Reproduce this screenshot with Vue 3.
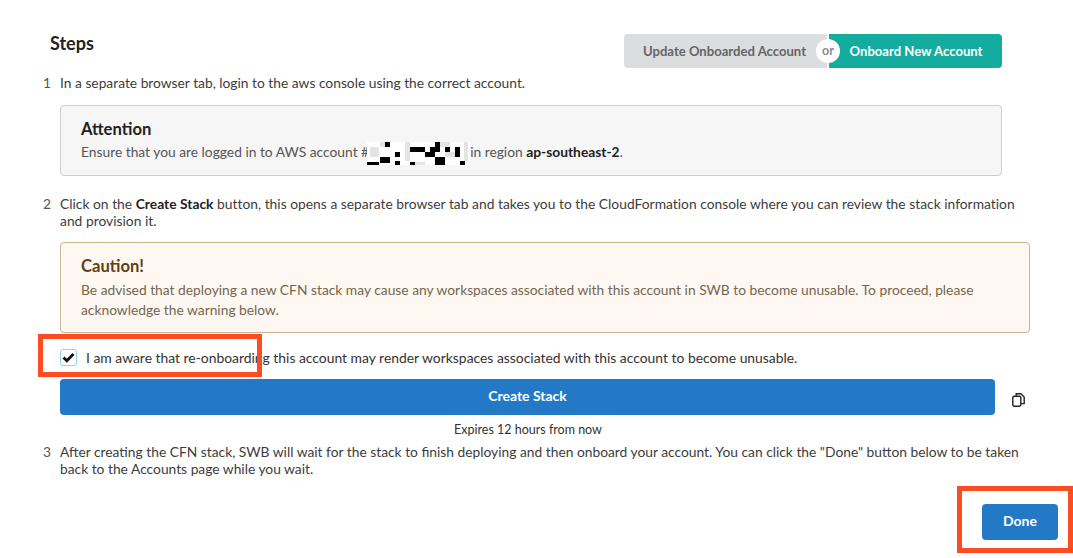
<script setup>
const redactLight = [[3,5,9,10],[38,0,5,19],[73,0,10,5],[78,10,10,5],[97,0,4,19],[48,20,10,3],[13,0,5,5]]
const redactDark = [[18,0,5,5],[13,15,10,6],[28,10,5,5],[28,19,5,4],[0,20,12,3],[43,5,15,5],[58,10,10,5],[63,5,10,5],[68,0,5,5],[68,15,10,8],[78,5,5,5],[88,5,5,10],[43,20,5,3],[93,19,5,4]]
</script>

<template>
  <div class="page">
    <header class="head">
      <h2 class="title">Steps</h2>
      <div class="toggle">
        <button class="seg seg-left">Update Onboarded Account</button>
        <span class="or">or</span>
        <button class="seg seg-right">Onboard New Account</button>
      </div>
    </header>

    <div class="step">
      <span class="num">1</span>
      <div class="body">
        <p class="line">In a separate browser tab, login to the aws console using the correct account.</p>
        <div class="msg attention">
          <div class="msg-title">Attention</div>
          <div class="msg-text">Ensure that you are logged in to AWS account #<svg class="redact" viewBox="0 0 103 23"><rect width="103" height="23" fill="#fff"/><rect v-for="(r, i) in redactLight" :key="'l' + i" :x="r[0]" :y="r[1]" :width="r[2]" :height="r[3]" fill="#e4e4e4"/><rect v-for="(r, i) in redactDark" :key="'d' + i" :x="r[0]" :y="r[1]" :width="r[2]" :height="r[3]" fill="#000"/></svg>in region <b>ap-southeast-2</b>.</div>
        </div>
      </div>
    </div>

    <div class="step step2">
      <span class="num">2</span>
      <div class="body">
        <p class="line">Click on the <b>Create Stack</b> button, this opens a separate browser tab and takes you to the CloudFormation console where you can review the stack information and provision it.</p>
        <div class="msg caution">
          <div class="msg-title">Caution!</div>
          <div class="msg-text">Be advised that deploying a new CFN stack may cause any workspaces associated with this account in SWB to become unusable. To proceed, please acknowledge the warning below.</div>
        </div>
        <label class="check">
          <span class="box">
            <svg width="13" height="11" viewBox="0 0 13 11"><path d="M1.5 5.6 4.8 8.8 11.5 2" fill="none" stroke="#111" stroke-width="2.8"/></svg>
          </span>
          <span>I am aware that re-onboarding this account may render workspaces associated with this account to become unusable.</span>
        </label>
        <div class="stack-row">
          <button class="primary stack">Create Stack</button>
          <svg class="copy" width="13" height="14" viewBox="0 0 13 14" fill="none" stroke="#222" stroke-width="1.4">
            <path d="M4.2 3V.8h4.6l3.4 3.2v6.6H8.8"/>
            <rect x=".8" y="3.2" width="8" height="10" rx="1.4"/>
          </svg>
        </div>
        <div class="expires">Expires 12 hours from now</div>
      </div>
    </div>

    <div class="step step3">
      <span class="num">3</span>
      <div class="body">
        <p class="line">After creating the CFN stack, SWB will wait for the stack to finish deploying and then onboard your account. You can click the "Done" button below to be taken back to the Accounts page while you wait.</p>
      </div>
    </div>

    <footer class="foot">
      <button class="primary done">Done</button>
    </footer>

    <div class="mark mark-check"></div>
    <div class="mark mark-done"></div>
  </div>
</template>

<style>
html, body { margin: 0; background: #fff; }
</style>

<style scoped>
.page {
  position: relative;
  width: 1073px;
  height: 558px;
  overflow: hidden;
  box-sizing: border-box;
  padding: 34px 15px 0 43px;
  font-family: Lato, "Open Sans", sans-serif;
  font-size: 13.8px;
  line-height: 17px;
  color: #3c3c3c;
  background: #fff;
}
.head {
  display: flex;
  justify-content: space-between;
  align-items: flex-start;
  width: 959px;
  height: 34px;
}
.title {
  margin: -1px 0 0 7px;
  font-size: 18px;
  line-height: 20px;
  font-weight: 700;
  color: #222;
}
.toggle {
  position: relative;
  display: flex;
  width: 378px;
  height: 34px;
}
.seg {
  border: 0;
  padding: 0;
  height: 34px;
  font: 700 13.1px Lato, sans-serif;
}
.seg-left {
  width: 203px;
  padding-right: 2px;
  margin-right: 2px;
  color: #656565;
  background: #dcddde;
  border-radius: 4px 0 0 4px;
}
.seg-right {
  width: 173px;
  padding-left: 1px;
  color: #fff;
  background: #14ac9f;
  border-radius: 0 4px 4px 0;
}
.or {
  position: absolute;
  left: 192px;
  top: 5px;
  width: 24px;
  height: 24px;
  border-radius: 50%;
  background: #fff;
  color: #8b8b8b;
  font-size: 12.5px;
  font-weight: 700;
  line-height: 23px;
  text-align: center;
}
.step {
  display: flex;
  margin-top: 6px;
}
.num {
  width: 17px;
  flex: none;
  color: #555;
}
.body {
  flex: 1;
  min-width: 0;
}
.line {
  margin: 0;
  width: 960px;
}
.line b, .msg-text b {
  color: #222;
}
.msg {
  box-sizing: border-box;
  border-radius: 4px;
  padding: 13px 20px;
}
.msg-title {
  font-size: 16.6px;
  line-height: 20px;
  font-weight: 700;
}
.attention {
  width: 942px;
  height: 71px;
  margin-top: 14px;
  background: #f6f6f6;
  border: 1px solid #cfcfcf;
  color: #555;
}
.attention .msg-title { color: #222; }
.attention .msg-text { margin-top: 4px; white-space: nowrap; }
.redact {
  width: 103px;
  height: 23px;
  margin: -5px 0 -5px -2px;
  vertical-align: middle;
}
.step2 {
  margin-top: 19px;
}
.step2 .line {
  letter-spacing: 0.02px;
}
.caution {
  width: 970px;
  height: 91px;
  margin-top: 13px;
  background: #fff8f2;
  border: 1px solid #c9b592;
  color: #73664f;
}
.caution .msg-title { color: #5f3f13; }
.caution .msg-text { line-height: 20px; margin-top: 4px; }
.check {
  display: flex;
  align-items: center;
  margin-top: 15px;
  height: 18px;
  font-size: 13.88px;
  color: #333;
  white-space: nowrap;
}
.box {
  display: flex;
  align-items: center;
  justify-content: center;
  box-sizing: border-box;
  width: 17px;
  height: 17px;
  margin: 0 9px 0 0;
  border: 1px solid #9dcbe6;
  border-radius: 3px;
  background: #fff;
}
.stack-row {
  display: flex;
  align-items: center;
  margin-top: 13px;
}
.primary {
  border: 0;
  border-radius: 4px;
  padding: 0 0 3px;
  background: #2479c7;
  color: #fff;
  font: 700 14px Lato, sans-serif;
}
.stack {
  width: 935px;
  height: 36px;
}
.copy {
  margin: 6px 0 0 17px;
}
.expires {
  width: 936px;
  margin-top: 6px;
  line-height: 18px;
  text-align: center;
  font-size: 12.5px;
  color: #333;
}
.step3 {
  margin-top: 4px;
}
.foot {
  display: flex;
  justify-content: flex-end;
  width: 1015px;
  margin-top: 27px;
}
.done {
  width: 76px;
  height: 36px;
}
.mark {
  position: absolute;
  box-sizing: border-box;
  border: 5px solid #fc4c21;
  pointer-events: none;
}
.mark-check {
  left: 38px;
  top: 334px;
  width: 224px;
  height: 43px;
}
.mark-done {
  left: 957px;
  top: 486px;
  width: 116px;
  height: 67px;
}
</style>
